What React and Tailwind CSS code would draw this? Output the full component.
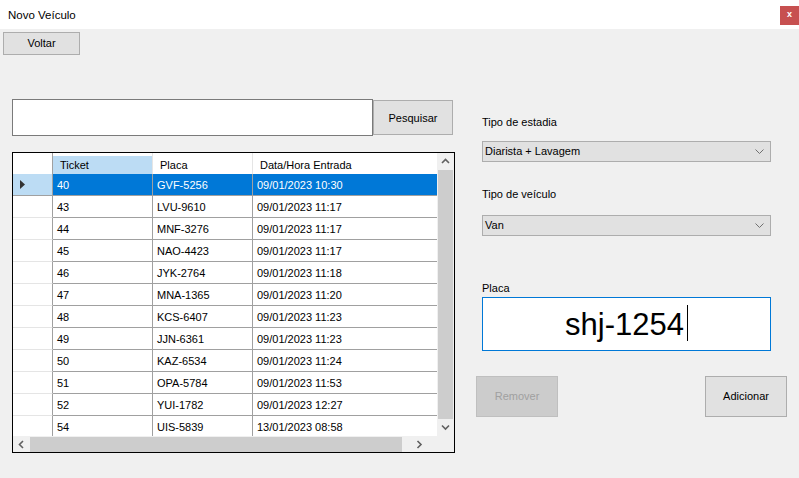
import React from 'react';

const rows = [
  { ticket: '40', placa: 'GVF-5256', data: '09/01/2023 10:30' },
  { ticket: '43', placa: 'LVU-9610', data: '09/01/2023 11:17' },
  { ticket: '44', placa: 'MNF-3276', data: '09/01/2023 11:17' },
  { ticket: '45', placa: 'NAO-4423', data: '09/01/2023 11:17' },
  { ticket: '46', placa: 'JYK-2764', data: '09/01/2023 11:18' },
  { ticket: '47', placa: 'MNA-1365', data: '09/01/2023 11:20' },
  { ticket: '48', placa: 'KCS-6407', data: '09/01/2023 11:23' },
  { ticket: '49', placa: 'JJN-6361', data: '09/01/2023 11:23' },
  { ticket: '50', placa: 'KAZ-6534', data: '09/01/2023 11:24' },
  { ticket: '51', placa: 'OPA-5784', data: '09/01/2023 11:53' },
  { ticket: '52', placa: 'YUI-1782', data: '09/01/2023 12:27' },
  { ticket: '54', placa: 'UIS-5839', data: '13/01/2023 08:58' },
];

// small chevron used by scrollbars and combos
const Chevron = ({ dir = 'down', className = '' }) => {
  const paths = {
    up: 'M1 5 L4.5 1.5 L8 5',
    down: 'M1 1.5 L4.5 5 L8 1.5',
    left: 'M5 1 L1.5 4.5 L5 8',
    right: 'M1.5 1 L5 4.5 L1.5 8',
  };
  const horiz = dir === 'left' || dir === 'right';
  return (
    <svg
      width={horiz ? 7 : 9}
      height={horiz ? 9 : 7}
      viewBox={horiz ? '0 0 7 9' : '0 0 9 7'}
      className={className}
    >
      <path d={paths[dir]} fill="none" stroke="currentColor" strokeWidth="1.6" />
    </svg>
  );
};

const ComboBox = ({ value }) => (
  <div className="w-[289px] h-[21px] bg-[#e1e1e1] border border-[#adadad] flex items-center justify-between pl-[2px] pr-[6px]">
    <span className="text-[11px] text-black">{value}</span>
    <svg width="9" height="5" viewBox="0 0 9 5" className="text-[#707070]">
      <path d="M0.5 0.5 L4.5 4.5 L8.5 0.5" fill="none" stroke="currentColor" strokeWidth="1" />
    </svg>
  </div>
);

const DataGrid = () => (
  <div className="w-[443px] h-[301px] border border-black bg-[#f0f0f0] flex flex-col">
    <div className="flex h-[283px]">
      {/* data area */}
      <div className="w-[424px] h-[283px] overflow-hidden bg-white flex flex-col">
        {/* header */}
        <div className="flex h-[21px] shrink-0 bg-white">
          <div className="w-[40px] h-[21px] border-r border-[#a0a0a0]" />
          <div className="w-[100px] h-[21px] border-r border-[#e5e5e5] pt-[3px]">
            <div className="h-[18px] bg-[#bcdcf4] flex items-center pl-[7px] text-[11px]">Ticket</div>
          </div>
          <div className="w-[100px] h-[21px] border-r border-[#e5e5e5] flex items-center pl-[7px] pt-[3px] text-[11px]">
            Placa
          </div>
          <div className="w-[184px] h-[21px] flex items-center pl-[7px] pt-[3px] text-[11px]">
            Data/Hora Entrada
          </div>
        </div>
        {rows.map((r, i) => {
          const selected = i === 0;
          const cell = `h-[22px] border-r border-b border-[#a0a0a0] flex items-center pl-[4px] pt-[1px] text-[11px] ${
            selected ? 'bg-[#0078d7] text-white' : 'bg-white text-black'
          }`;
          return (
            <div key={r.ticket} className="flex h-[22px] shrink-0">
              <div
                className={`w-[40px] h-[22px] border-r border-[#a0a0a0] border-b flex items-center pl-[7px] ${
                  selected ? 'bg-[#bcdcf4] border-b-[#a0a0a0]' : 'bg-white border-b-[#e5e5e5]'
                }`}
              >
                {selected && (
                  <svg width="5" height="9" viewBox="0 0 5 9">
                    <path d="M0 0 L5 4.5 L0 9 Z" fill="#333" />
                  </svg>
                )}
              </div>
              <div className={`w-[100px] ${cell}`}>{r.ticket}</div>
              <div className={`w-[100px] ${cell}`}>{r.placa}</div>
              <div className={`w-[184px] ${cell} border-r-0`}>{r.data}</div>
            </div>
          );
        })}
      </div>
      {/* vertical scrollbar */}
      <div className="w-[17px] h-[283px] bg-[#f0f0f0] flex flex-col items-center">
        <div className="h-[17px] flex items-center justify-center text-[#606060]">
          <Chevron dir="up" />
        </div>
        <div className="w-[15px] h-[249px] bg-[#cdcdcd]" />
        <div className="h-[17px] flex items-center justify-center text-[#606060]">
          <Chevron dir="down" />
        </div>
      </div>
    </div>
    {/* horizontal scrollbar */}
    <div className="flex h-[16px]">
      <div className="w-[424px] h-[16px] bg-[#f0f0f0] flex items-center">
        <div className="w-[17px] flex items-center justify-center text-[#606060]">
          <Chevron dir="left" />
        </div>
        <div className="w-[372px] h-[15px] bg-[#cdcdcd]" />
        <div className="flex-1 flex items-center justify-center text-[#606060]">
          <Chevron dir="right" />
        </div>
      </div>
      <div className="w-[17px] h-[16px] bg-[#f0f0f0]" />
    </div>
  </div>
);

export default function App() {
  return (
    <div
      className="w-[799px] h-[478px] bg-[#f0f0f0] flex flex-col overflow-hidden text-black"
      style={{ fontFamily: '"Liberation Sans", Arial, sans-serif' }}
    >
      {/* title bar */}
      <div className="h-[29px] bg-white flex items-start justify-between shrink-0">
        <span className="text-[11.5px] ml-[8px] mt-[7px]">Novo Veículo</span>
        <div className="w-[19px] h-[19px] mt-[6px] bg-[#c75050] flex items-center justify-center text-white text-[9px] font-bold leading-none pb-[2px]">
          x
        </div>
      </div>

      {/* back button */}
      <button className="ml-[3px] mt-[3px] w-[77px] h-[23px] bg-[#e1e1e1] border border-[#adadad] text-[11px] flex items-center justify-center">
        Voltar
      </button>

      <div className="flex mt-[44px]">
        {/* left column */}
        <div className="ml-[12px] w-[444px] flex flex-col">
          <div className="flex items-center h-[37px]">
            <div className="w-[361px] h-[37px] bg-white border border-[#7a7a7a]" />
            <button className="w-[80px] h-[35px] bg-[#e1e1e1] border border-[#adadad] text-[11px] flex items-center justify-center pt-[1px]">
              Pesquisar
            </button>
          </div>
          <div className="mt-[16px]">
            <DataGrid />
          </div>
        </div>

        {/* right column */}
        <div className="ml-[20px] w-[311px] flex flex-col">
          <div className="ml-[6px] mt-[17px] h-[13px] text-[11px] leading-[13px]">Tipo de estadia</div>
          <div className="ml-[6px] mt-[12px]">
            <ComboBox value="Diarista + Lavagem" />
          </div>
          <div className="ml-[6px] mt-[26px] h-[13px] text-[11px] leading-[13px]">Tipo de veículo</div>
          <div className="ml-[6px] mt-[14px]">
            <ComboBox value="Van" />
          </div>
          <div className="ml-[6px] mt-[46px] h-[13px] text-[11px] leading-[13px]">Placa</div>
          <div className="ml-[6px] mt-[2px] w-[289px] h-[54px] bg-white border border-[#0078d7] flex items-center justify-center">
            <span className="text-[31px] leading-none">shj-1254</span>
            <span className="inline-block w-[1px] h-[36px] bg-black ml-[3px] mb-[2px]" />
          </div>
          <div className="mt-[25px] flex justify-between">
            <button className="w-[82px] h-[41px] bg-[#cccccc] border border-[#bfbfbf] text-[11px] text-[#a0a0a0] flex items-center justify-center">
              Remover
            </button>
            <button className="w-[82px] h-[41px] bg-[#e1e1e1] border border-[#adadad] text-[11px] flex items-center justify-center">
              Adicionar
            </button>
          </div>
        </div>
      </div>
    </div>
  );
}
